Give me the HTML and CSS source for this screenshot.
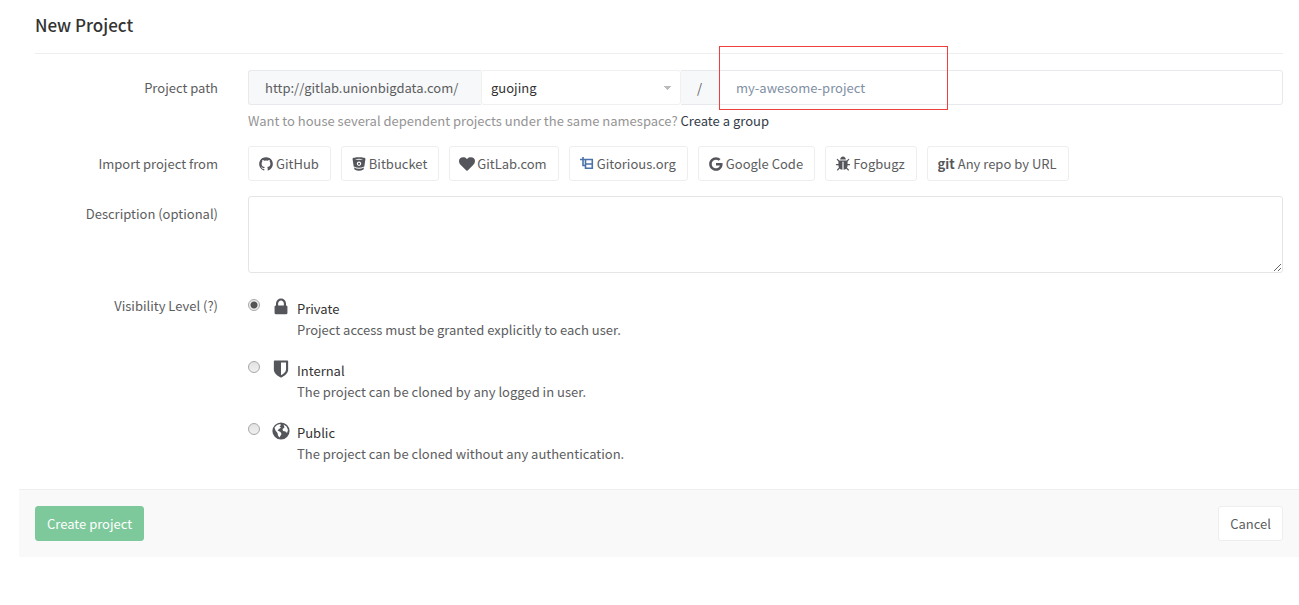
FILE: index.html
```html
<!DOCTYPE html>
<html lang="en">
<head>
<meta charset="utf-8">
<title>New Project</title>
<meta name="viewport" content="width=device-width,initial-scale=1">
<link rel="stylesheet" href="styles.css">
</head>
<body>

<main class="content">
  <h3 class="page-title">New Project</h3>

  <form class="new-project">
    <div class="form-group">
      <label class="control-label" for="project_path">Project path</label>
      <div class="controls">
        <div class="input-group">
          <span class="addon">http://gitlab.unionbigdata.com/</span>
          <select class="namespace" aria-label="Namespace">
            <option>guojing</option>
          </select>
          <span class="addon slash">/</span>
          <div class="path-field">
            <input class="form-control" id="project_path" type="text" placeholder="my-awesome-project">
            <span class="highlight"></span>
          </div>
        </div>
        <p class="help">Want to house several dependent projects under the same namespace? <a href="#">Create a group</a></p>
      </div>
    </div>

    <div class="form-group">
      <span class="control-label">Import project from</span>
      <div class="controls import-buttons">
        <a class="btn" href="#">
          <svg class="icon" viewBox="0 0 1792 1792"><path d="M896 128q209 0 385.5 103t279.5 279.5 103 385.5q0 251-146.5 451.5t-378.5 277.5q-27 5-40-7t-13-30q0-3 .5-76.5t.5-134.5q0-97-52-142 57-6 102.5-18t94-39 81-66.5 53-105 20.5-150.5q0-119-79-206 37-91-8-204-28-9-81 11t-92 44l-38 24q-93-26-192-26t-192 26q-16-11-42.5-27t-83.5-38.5-85-13.5q-45 113-8 204-79 87-79 206 0 85 20.5 150t52.5 105 80.5 67 94 39 102.5 18q-39 36-49 103-21 10-45 15t-57 5-65.5-21.5-55.5-62.5q-19-32-48.5-52t-49.5-24l-20-3q-21 0-29 4.5t-5 11.5 9 14 13 12l7 5q22 10 43.5 38t31.5 51l10 23q13 38 44 61.5t67 30 69.5 7 55.5-3.5l23-4q0 38 .5 88.5t.5 54.5q0 18-13 30t-40 7q-232-77-378.5-277.5t-146.5-451.5q0-209 103-385.5t279.5-279.5 385.5-103z"/></svg>
          GitHub
        </a>
        <a class="btn" href="#">
          <svg class="icon" viewBox="-1 -1 16 16"><path fill-rule="evenodd" d="M.5 1.800C.5 -.2 13.500 -.2 13.500 1.800L12.300 9.500Q7 12 1.700 9.500ZM3 2.200Q7 3.400 11 2.200Q7 1.200 3 2.200ZM7 4.500a2.200 2.200 0 1 0 .01 0ZM7 5.700a1 1 0 1 1-.01 0Z"/><path d="M2 10.500Q7 13 12 10.500L11.500 12.600Q7 15 2.500 12.600Z"/></svg>
          Bitbucket
        </a>
        <a class="btn" href="#">
          <svg class="icon" viewBox="0 0 1792 1792"><path d="M896 1664q-26 0-44-18l-624-602q-10-8-27.5-26t-55.5-65.5-68-97.5-53.5-121-23.5-138q0-220 127-344t351-124q62 0 126.5 21.5t120 58 95.5 68.5 76 68q36-36 76-68t95.5-68.5 120-58 126.5-21.5q224 0 351 124t127 344q0 221-229 450l-623 600q-18 18-44 18z"/></svg>
          GitLab.com
        </a>
        <a class="btn" href="#">
          <svg class="icon gitorious" viewBox="-1 -1 16 16"><path d="M0 2.500h13M3 0v8.500h2M5.500 2.500v8.800H12.300V2.500M5.500 7h7"/></svg>
          Gitorious.org
        </a>
        <a class="btn" href="#">
          <svg class="icon" viewBox="0 0 1792 1792"><path d="M896 786h725q12 67 12 128 0 217-91 387.5t-259.5 266.5-386.5 96q-157 0-299-60.5t-245-163.5-163.5-245-60.5-299 60.5-299 163.5-245 245-163.5 299-60.5q300 0 515 201l-209 201q-123-119-306-119-129 0-238.5 65t-173.5 176.5-64 243.5 64 243.5 173.5 176.5 238.5 65q87 0 160-24t120-60 82-82 51.5-87 22.5-78h-436v-264z"/></svg>
          Google Code
        </a>
        <a class="btn" href="#">
          <svg class="icon" viewBox="0 0 1792 1792"><path d="M1696 960q0 26-19 45t-45 19h-224q0 171-67 290l208 209q19 19 19 45t-19 45q-18 19-45 19t-45-19l-198-197q-5 5-15 13t-42 28.500-65 36.500-82 29-97 13v-896h-128v896q-51 0-101.500-13.500t-87-33-66-39-43.500-32.500l-15-14-183 207q-20 21-48 21-24 0-43-16-19-18-20.500-44.500t15.500-46.500l202-227q-58-114-58-274h-224q-26 0-45-19t-19-45 19-45 45-19h224v-294l-173-173q-19-19-19-45t19-45 45-19 45 19l173 173h844l173-173q19-19 45-19t45 19 19 45-19 45l-173 173v294h224q26 0 45 19t19 45zm-480-576h-640q0-133 93.500-226.500t226.500-93.500 226.500 93.500 93.500 226.500z"/></svg>
          Fogbugz
        </a>
        <a class="btn" href="#"><b class="git">git</b> Any repo by URL</a>
      </div>
    </div>

    <div class="form-group">
      <label class="control-label" for="project_description">Description (optional)</label>
      <div class="controls">
        <textarea class="form-control" id="project_description"></textarea>
      </div>
    </div>

    <div class="form-group">
      <span class="control-label">Visibility Level (<a class="plain" href="#">?</a>)</span>
      <div class="controls levels">
        <div class="radio">
          <input type="radio" name="visibility" id="level_private" checked>
          <svg class="level-icon" viewBox="0 0 1792 1792"><path d="M640 768h512v-192q0-106-75-181t-181-75-181 75-75 181v192zm832 96v576q0 40-28 68t-68 28h-960q-40 0-68-28t-28-68v-576q0-40 28-68t68-28h32v-192q0-184 132-316t316-132 316 132 132 316v192h32q40 0 68 28t28 68z"/></svg>
          <label for="level_private">
            <span class="level-title">Private</span>
            <span class="level-text">Project access must be granted explicitly to each user.</span>
          </label>
        </div>
        <div class="radio">
          <input type="radio" name="visibility" id="level_internal">
          <svg class="level-icon" viewBox="0 0 1792 1792"><path d="M1344 960v-640h-448v1137q119-63 213-137 235-184 235-360zm192-768v768q0 86-33.500 170.500t-83 150-118 127.500-126.500 103-121 77.500-89.500 49.500-42.500 20q-12 6-26 6t-26-6q-16-7-42.500-20t-89.500-49.500-121-77.500-126.500-103-118-127.500-83-150-33.500-170.500v-768q0-26 19-45t45-19h1152q26 0 45 19t19 45z"/></svg>
          <label for="level_internal">
            <span class="level-title">Internal</span>
            <span class="level-text">The project can be cloned by any logged in user.</span>
          </label>
        </div>
        <div class="radio">
          <input type="radio" name="visibility" id="level_public">
          <svg class="level-icon" viewBox="0 0 20 20"><circle cx="10" cy="10" r="8.600"/><path class="land" d="M3.500 6.500L6 4L9 3L10 4L8.500 5.500L10 6.500L8 8L6.500 9.500L9.500 11L10.500 13L8.500 16.500L7 14.500L6.500 12L4.500 9.500ZM12.500 3.500L15.500 5.500L17 9L16 12L14.500 10.500L12 10L11.500 8L13.500 6.500Z"/></svg>
          <label for="level_public">
            <span class="level-title">Public</span>
            <span class="level-text">The project can be cloned without any authentication.</span>
          </label>
        </div>
      </div>
    </div>

    <div class="form-actions">
      <button class="btn btn-create" type="submit" disabled>Create project</button>
      <a class="btn" href="#">Cancel</a>
    </div>
  </form>
</main>

</body>
</html>
```
FILE: styles.css
```css
*{box-sizing:border-box}
body{margin:0;background:#fff;color:#5c5d5e;
     font:13px/20px "Noto Sans CJK SC","Noto Sans",sans-serif}
a{color:#333c48;text-decoration:none}
a.plain{color:inherit}
input,select,textarea,button{font:inherit}

.content{padding:13px 16px 0 35px}
.page-title{margin:0 0 16px;padding-bottom:16px;border-bottom:1px solid #eee;
            font-size:17px;line-height:24px;font-weight:500;color:#333}

.form-group{display:grid;grid-template-columns:1fr 5fr;margin:0 -15px 15px}
.control-label{padding:8px 15px 0;text-align:right}
.controls{padding:0 15px;min-width:0}

.input-group{display:flex;height:35px}
.addon{flex:0 0 233px;padding:7px 16px;background:#f7f8fa;border:1px solid #e7e9ed;
       border-right:0;border-radius:3px 0 0 3px}
.addon.slash{flex-basis:38px;border-left:0;border-radius:0}
.namespace{width:200px;padding:0 9px;border:1px solid #f0f0f0;border-radius:3px;color:#333;
           appearance:none;
           background:conic-gradient(from -45deg at 50% 100%,#bbb 90deg,transparent 0) right 8px center/8px 4px no-repeat #fff;
           background:linear-gradient(to bottom right,#bbb 50%,transparent 50%) right 8px center/4px 4px no-repeat,
                      linear-gradient(to bottom left,#bbb 50%,transparent 50%) right 12px center/4px 4px no-repeat #fff}
.path-field{position:relative;flex:1}
.form-control{display:block;width:100%;padding:6px 16px;border:1px solid #e7e9ed;
              border-radius:3px;background:#fff;color:#333;outline:none}
.path-field .form-control{height:35px;border-radius:0 3px 3px 0}
.form-control::placeholder{color:#7f8fa4;opacity:1}
textarea.form-control{height:77px;border-color:#e5e5e5;resize:vertical}
/* marks the part of the field to fill in */
.highlight{position:absolute;left:0;top:-24px;width:229px;height:64px;
           border:1px solid #f03e3a;pointer-events:none}
.help{margin:6px 0 0;color:#959494}

.import-buttons{display:flex;flex-wrap:wrap;gap:10px}
.btn{display:inline-flex;align-items:center;gap:3px;height:35px;padding:0 11px;
     border:1px solid #eee;border-radius:3px;background:#fff;color:#5c5d5e;white-space:nowrap}
.import-buttons .btn{padding-left:10px}
.icon{width:16px;height:16px;margin:0 -1px;fill:#54565b}
.gitorious{fill:none;stroke:#4a72a8;stroke-width:1.600}
.git{font-weight:700;color:#54565b}

.levels{padding-top:8px}
.radio{display:flex;align-items:flex-start;margin-bottom:18px}
.radio:last-child{margin-bottom:10px}
.radio input{appearance:none;flex:none;width:12px;height:12px;margin:3px 11px 0 0;
             border:1px solid #a8a8a8;border-radius:50%;
             background:linear-gradient(#e2e2e2,#f0f0f0)}
.radio input:checked{background:radial-gradient(circle,#555 0 3px,transparent 4px),#eee}
.level-icon{flex:none;width:20px;height:20px;margin:1px 6px 0 0;fill:#54565b}
.land{fill:#fff}
.radio label{padding-top:2px}
.level-title,.level-text{display:block;line-height:21px}
.level-title{color:#333}

.form-actions{display:flex;justify-content:space-between;margin:0 -16px;padding:16px;
              border-top:1px solid #eee;background:#f9f9f9}
.btn-create{border-color:#7dc99b;background:#7dc99b;color:#fff}
```
